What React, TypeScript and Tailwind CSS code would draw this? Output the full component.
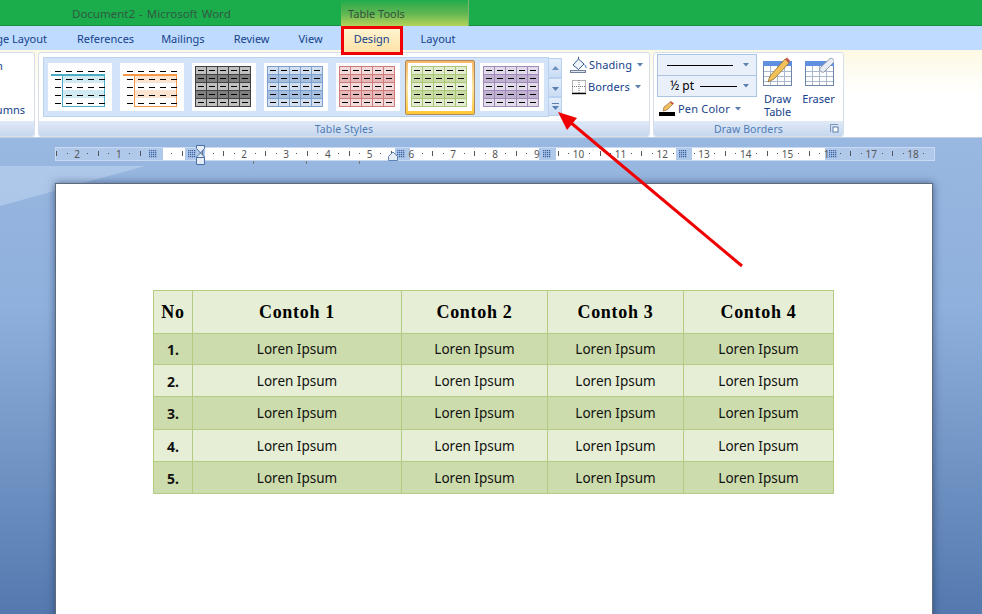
import React from "react";

const UI = "font-['Noto_Sans','Open_Sans',sans-serif]";

function Dashes({ x, y }: { x: number; y: number }) {
  return <line x1={x} x2={x + 6} y1={y} y2={y} stroke="#000" strokeWidth={1} />;
}

function ListSwatch({ c, band }: { c: string; band: string }) {
  const xs = [7, 18, 29, 40, 51];
  const ys = [8, 16, 24, 32, 40];
  return (
    <svg width={64} height={48} className="block bg-white shrink-0">
      <rect x={15} y={12} width={41} height={8} fill={band} />
      <rect x={15} y={27} width={41} height={8} fill={band} />
      <rect x={14.5} y={11.5} width={42} height={32} fill="none" stroke={c} />
      <rect x={3} y={11} width={53} height={2} fill={c} />
      {ys.map((y) => xs.map((x) => <Dashes key={`${x}-${y}`} x={x} y={y + 0.5} />))}
    </svg>
  );
}

function GridSwatch({ b, l, d }: { b: string; l: string; d: string }) {
  const cols = [0, 1, 2, 3, 4];
  const rows = [0, 1, 2, 3, 4];
  return (
    <svg width={64} height={48} className="block bg-white shrink-0">
      {rows.map((r) =>
        cols.map((k) => (
          <g key={`${r}-${k}`}>
            <rect x={3.5 + k * 11} y={3.5 + r * 8} width={11} height={8} fill={r % 2 ? d : l} stroke={b} />
            <line x1={6 + k * 11} x2={12 + k * 11} y1={7.5 + r * 8} y2={7.5 + r * 8} stroke="#000" />
          </g>
        ))
      )}
    </svg>
  );
}

function Caret({ className = "" }: { className?: string }) {
  return (
    <svg width={6} height={4} className={`block shrink-0 ${className}`}>
      <path d="M0 0H6L3 3.5Z" fill="#5a7fb0" />
    </svg>
  );
}

function ScrollBtn({ kind, h }: { kind: "up" | "down" | "more"; h: string }) {
  return (
    <div className={`w-[14px] ${h} flex items-center justify-center border border-[#b9d0ee] bg-gradient-to-b from-[#e3eefb] to-[#c9dcf4]`}>
      <svg width={9} height={8}>
        {kind === "more" && <rect x={1} y={0} width={7} height={1} fill="#5a7fb0" />}
        {kind === "up" ? <path d="M1 6H8L4.5 2Z" fill="#6e90bd" /> : <path d="M1 3H8L4.5 7Z" fill="#5a7fb0" />}
      </svg>
    </div>
  );
}

function Ruler() {
  const z = 160.6;
  const u = 41.8;
  const whites = [[163, 185], [205, 395], [410, 539], [556, 676], [692, 825]];
  const markers = [153, 192, 401, 547, 683, 833];
  const ticks: React.ReactNode[] = [];
  for (let n = -3; n < 19; n++) {
    for (const f of [0.25, 0.5, 0.75]) {
      const x = Math.round(z + (n + f) * u);
      if (x < 56 || x > 930) continue;
      ticks.push(
        f === 0.5 ? (
          <rect key={`${n}-${f}`} x={x} y={6} width={1} height={5} fill="#555" />
        ) : (
          <rect key={`${n}-${f}`} x={x} y={8} width={1} height={1} fill="#555" />
        )
      );
    }
  }
  const nums: [number, number][] = [[2, z - 2 * u], [1, z - u]];
  for (let n = 1; n <= 18; n++) nums.push([n, z + n * u]);
  return (
    <svg width={982} height={30} className="block">
      <rect x={55.5} y={2.5} width={879} height={13} fill="#b0c8ea" stroke="#c9daf2" />
      {whites.map(([a, b]) => (
        <rect key={a} x={a} y={3} width={b - a} height={12} fill="#fff" />
      ))}
      {ticks}
      {nums.map(([n, x], i) => (
        <text key={i} x={x} y={12.5} textAnchor="middle" fontSize={10} fontFamily="Noto Sans" fill="#555">
          {n}
        </text>
      ))}
      {markers.map((m) => (
        <g key={m}>
          <rect x={m - 4} y={5} width={8} height={8} fill="#3f67a6" />
          {[1, 3, 5, 7].map((d) => (
            <React.Fragment key={d}>
              <line x1={m - 4 + d + 0.5} x2={m - 4 + d + 0.5} y1={5} y2={13} stroke="#b0c8ea" strokeWidth={0.7} />
              <line y1={5 + d + 0.5} y2={5 + d + 0.5} x1={m - 4} x2={m + 4} stroke="#b0c8ea" strokeWidth={0.7} />
            </React.Fragment>
          ))}
        </g>
      ))}
      <path d="M196.5 0.5H204.5V3.5L200.5 8L204.5 12V19.5H196.5V12L200.5 8L196.5 3.5Z" fill="#e6edf7" stroke="#4a6fa5" />
      <line x1={196.5} x2={204.5} y1={12.5} y2={12.5} stroke="#4a6fa5" />
      <path d="M388.5 15.5V11.5L393 7L397.5 11.5V15.5Z" fill="#e6edf7" stroke="#5f83b5" />
      <rect x={253} y={16} width={1} height={3} fill="#777" />
      <rect x={306} y={16} width={1} height={3} fill="#777" />
      <rect x={359} y={16} width={1} height={3} fill="#777" />
    </svg>
  );
}

function TableIcon({ children }: { children: React.ReactNode }) {
  return (
    <svg width={31} height={30} className="block">
      <rect x={2.5} y={4.5} width={28} height={24} fill="#fff" stroke="#6d86a8" />
      <rect x={2} y={4} width={29} height={5} fill="#5e8fe0" />
      {[9, 16, 23].map((x) => (
        <line key={x} x1={x + 0.5} x2={x + 0.5} y1={9} y2={28} stroke="#a9b8cb" />
      ))}
      {[14, 19, 24].map((y) => (
        <line key={y} x1={3} x2={30} y1={y + 0.5} y2={y + 0.5} stroke="#a9b8cb" />
      ))}
      {children}
    </svg>
  );
}

const rows = ["1.", "2.", "3.", "4.", "5."];
const rowH = ["h-[31px]", "h-[32px]", "h-[33px]", "h-[32px]", "h-[32px]"];
const td = "border border-[#b3cc82] text-center";
const tdd = "border border-[#b3cc82] text-center pt-[1px]";

export default function App() {
  return (
    <div className={`relative w-[982px] h-[614px] overflow-hidden ${UI} bg-gradient-to-b from-[#a0bee5] via-[#8fb0dc] to-[#5479ae]`}>
      {/* title bar */}
      <div className="h-[26px] bg-[#1bac4b] border-b border-[#15903e] flex">
        <div className="pl-[72px] w-[341px] pt-[5px] text-[11.5px] leading-[18px] text-[#2f5a44] [word-spacing:1px]">
          Document2 - Microsoft Word
        </div>
        <div className="w-[128px] h-[26px] border-r border-[#7fb276] bg-gradient-to-b from-[#1bac4b] via-[#5bb552] to-[#b3d35a] pl-[7px] pt-[5px] text-[11px] leading-[18px] text-[#34503a]">
          Table Tools
        </div>
      </div>

      {/* tabs */}
      <div className="h-[24px] bg-[#bfdbff] flex items-start text-[11px] leading-[26px] text-[#15428b] whitespace-nowrap overflow-visible">
        <div className="-ml-[17px] w-[64px] shrink-0 text-right">Page Layout</div>
        <div className="ml-[30px]">References</div>
        <div className="ml-[27px]">Mailings</div>
        <div className="ml-[29px]">Review</div>
        <div className="ml-[29px]">View</div>
        <div className="relative ml-[18px] w-[62px] h-[29px] text-center bg-gradient-to-b from-[#fff3cf] to-[#fde2a6] border-[3px] border-[#f00000] leading-[20px] z-10">
          Design
        </div>
        <div className="ml-[18px] w-[49px]">Layout</div>
      </div>

      {/* ribbon */}
      <div className="h-[88px] bg-gradient-to-b from-[#fdf9e3] via-[#ffffff] to-[#ffffff] border-b border-[#c5d0df] pt-[2px] flex items-start text-[11px] text-[#15428b] whitespace-nowrap">
        {/* clipped group */}
        <div className="w-[35px] h-[85px] border border-l-0 border-[#d5dfec] rounded-r-[3px] overflow-hidden flex flex-col">
          <div className="flex-1 bg-white flex flex-col items-end pr-[9px] pt-[5px]">
            <div className="leading-[16px] w-[26px] text-left -translate-x-[3px]">n</div>
            <div className="leading-[16px] mt-[28px]">umns</div>
          </div>
          <div className="h-[15px] bg-gradient-to-b from-[#e0eaf7] to-[#c6d7ee]" />
        </div>

        {/* Table Styles */}
        <div className="ml-[3px] w-[612px] h-[85px] border border-[#d5dfec] rounded-[3px] overflow-hidden flex flex-col bg-white">
          <div className="flex-1 flex pl-[4px] pt-[4px]">
            <div className="w-[520px] h-[60px] flex flex-col">
              <div className="w-[506px] h-[60px] bg-[#d3e4f9] border border-[#bcd3f0] flex items-center pl-[4px] gap-[8px]">
                <ListSwatch c="#4bacc6" band="#d2eaf1" />
                <ListSwatch c="#f79646" band="#fde4d0" />
                <GridSwatch b="#404040" l="#c0c0c0" d="#7f7f7f" />
                <GridSwatch b="#7ba0cd" l="#d3dfee" d="#a7bfde" />
                <GridSwatch b="#cf7b79" l="#f2dbdb" d="#e5b8b7" />
                <div className="-mx-[3px] w-[70px] h-[55px] rounded-[2px] border border-[#b08a5c] bg-gradient-to-b from-[#f6b768] via-[#ffe9a0] to-[#ffc72e] flex items-center justify-center shrink-0">
                  <GridSwatch b="#a9c673" l="#e4edd3" d="#cbdba8" />
                </div>
                <GridSwatch b="#a08ab8" l="#e2dcea" d="#c1b2d2" />
              </div>
            </div>
            <div className="-ml-[15px] flex flex-col">
              <div className="pt-[1px]">
                <ScrollBtn kind="up" h="h-[20px]" />
                <ScrollBtn kind="down" h="h-[19px]" />
                <ScrollBtn kind="more" h="h-[19px]" />
              </div>
            </div>
            <div className="ml-[8px] -mt-[3px] flex flex-col">
              <div className="h-[22px] flex items-center">
                <svg width={18} height={18} className="block shrink-0">
                  <rect x={0.5} y={14.5} width={15} height={2} fill="#dfe6ef" stroke="#6d7f99" />
                  <path d="M3 9L8.5 3L14 8L8.5 13.5Z" fill="#eef3f9" stroke="#385d8a" />
                  <path d="M8.5 3V0.8" stroke="#385d8a" />
                  <path d="M14 8C16 9 17 11 16.5 12.5C15.5 12 15 10 14 8Z" fill="#3f78c4" />
                </svg>
                <span className="ml-[1px] tracking-[0.15px]">Shading</span>
                <Caret className="ml-[5px]" />
              </div>
              <div className="h-[22px] flex items-center">
                <svg width={16} height={15} className="block ml-[2px] shrink-0">
                  <rect x={0.5} y={0.5} width={13} height={12} fill="none" stroke="#666" strokeDasharray="1 1" />
                  <line x1={7} x2={7} y1={0} y2={13} stroke="#777" strokeDasharray="1 1" />
                  <line x1={0} x2={14} y1={6.5} y2={6.5} stroke="#777" strokeDasharray="1 1" />
                  <rect x={0} y={13} width={14} height={1.2} fill="#000" />
                </svg>
                <span className="tracking-[0.15px]">Borders</span>
                <Caret className="ml-[5px]" />
              </div>
            </div>
          </div>
          <div className="h-[15px] bg-gradient-to-b from-[#e0eaf7] to-[#c6d7ee] text-center leading-[17px] text-[#4f7cb5] tracking-[0.1px] text-[10.5px]">
            Table Styles
          </div>
        </div>

        {/* Draw Borders */}
        <div className="ml-[3px] w-[191px] h-[85px] border border-[#d5dfec] rounded-[3px] overflow-hidden flex flex-col bg-white">
          <div className="flex-1 flex pl-[3px] pt-[1px]">
            <div className="w-[100px] flex flex-col">
              <div className="h-[22px] border border-[#a9c3e4] bg-[#e9f0fa] flex items-center pl-[9px]">
                <div className="w-[66px] h-[1px] bg-black" />
                <Caret className="ml-[10px]" />
              </div>
              <div className="h-[22px] -mt-[1px] border border-[#a9c3e4] bg-[#e9f0fa] flex items-center pl-[12px] text-black text-[12px]">
                <span className="w-[30px]">½ pt</span>
                <div className="w-[37px] h-[1px] bg-black" />
                <Caret className="ml-[6px]" />
              </div>
              <div className="mt-[3px] flex items-center h-[18px]">
                <svg width={18} height={17} className="block ml-[2px] shrink-0">
                  <rect x={0} y={11} width={16} height={4} fill="#000" />
                  <path d="M4 10L5 6L12 0.5L14.5 2.5L8 9Z" fill="#f0c060" stroke="#9a6b3b" strokeWidth={0.7} />
                  <path d="M12 0.5L14.5 2.5L13.5 3.5L11 1.5Z" fill="#d24a4a" />
                </svg>
                <span className="ml-[1px] tracking-[0.2px]">Pen Color</span>
                <Caret className="ml-[5px]" />
              </div>
            </div>
            <div className="w-[41px] pt-[3px] flex flex-col items-center">
              <div className="-ml-[3px]">
                <TableIcon>
                  <path d="M7 25L9 19L24 2L28 6L13 22Z" fill="#f2c25a" stroke="#8f6a35" strokeWidth={0.8} />
                  <path d="M24 2L26 0.5L29 3.5L28 6Z" fill="#c95a4e" />
                </TableIcon>
              </div>
              <div className="text-center leading-[13px] mt-[5px]">
                Draw
                <br />
                Table
              </div>
            </div>
            <div className="w-[41px] pt-[3px] flex flex-col items-center">
              <TableIcon>
                <path d="M17 11L27 1.5C29 0.5 32 3 31 5L21 15C19 16 15.5 13.5 17 11Z" fill="#e8edf3" stroke="#8d99a8" />
              </TableIcon>
              <div className="text-center leading-[13px] mt-[5px]">Eraser</div>
            </div>
          </div>
          <div className="relative h-[15px] bg-gradient-to-b from-[#e0eaf7] to-[#c6d7ee] text-center leading-[17px] text-[#4f7cb5] text-[10.5px] tracking-[0.1px]">
            Draw Borders
            <svg width={9} height={9} className="absolute right-[4px] top-[3px]">
              <path d="M0.5 8V0.5H8" fill="none" stroke="#7d97b8" />
              <rect x={3} y={3} width={5} height={5} fill="#fff" stroke="#5f7fa8" />
            </svg>
          </div>
        </div>
      </div>

      {/* ruler */}
      <div className="relative z-10 pt-[7px] -mb-[7px]">
        <Ruler />
      </div>

      {/* page */}
      <div className="relative z-[1] ml-[55px] mt-[15px] w-[878px] h-[440px] bg-white border-t border-l border-r border-[#5f6b7c] shadow-[0_0_8px_rgba(30,50,90,0.65)] pt-[106px] pl-[97px]">
        <table className="w-[681px] table-fixed border-collapse text-[#111] bg-[#e6eed5]">
          <colgroup>
            <col className="w-[39px]" />
            <col className="w-[209px]" />
            <col className="w-[146px]" />
            <col className="w-[136px]" />
            <col className="w-[150px]" />
          </colgroup>
          <tbody className="text-[13.5px]">
            <tr className="h-[43px] font-['Liberation_Serif',serif] font-bold text-[18px] tracking-[0.7px] text-black">
              <td className={td}>No</td>
              <td className={td}>Contoh 1</td>
              <td className={td}>Contoh 2</td>
              <td className={td}>Contoh 3</td>
              <td className={td}>Contoh 4</td>
            </tr>
            {rows.map((r, i) => (
              <tr key={r} className={`${rowH[i]} ${i % 2 === 0 ? "bg-[#cddcac]" : ""}`}>
                <td className={`${tdd} font-bold text-[14px]`}>{r}</td>
                <td className={tdd}>Loren Ipsum</td>
                <td className={tdd}>Loren Ipsum</td>
                <td className={tdd}>Loren Ipsum</td>
                <td className={tdd}>Loren Ipsum</td>
              </tr>
            ))}
          </tbody>
        </table>
      </div>

      {/* background wedge */}
      <svg width={145} height={70} className="absolute left-0 top-[140px]">
        <path d="M0 26H145L0 66Z" fill="#b6cdee" opacity={0.75} />
      </svg>

      {/* annotation arrow */}
      <svg width={982} height={614} className="absolute left-0 top-0 z-20 pointer-events-none">
        <line x1={742} y1={266} x2={570} y2={122} stroke="#f00000" strokeWidth={3} />
        <path d="M558 112L577 118L567 130Z" fill="#f00000" />
      </svg>
    </div>
  );
}
